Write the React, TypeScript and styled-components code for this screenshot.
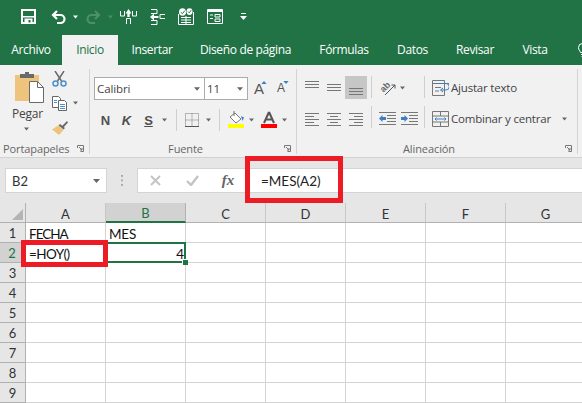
import React from "react";
import styled, { createGlobalStyle } from "styled-components";

const GlobalStyle = createGlobalStyle`
  html, body {
    margin: 0;
    padding: 0;
    width: 582px;
    height: 403px;
    overflow: hidden;
    background: #fff;
  }
`;

const uiFont = `"Open Sans", "Noto Sans", sans-serif`;

const Page = styled.div`
  width: 582px;
  height: 403px;
  overflow: hidden;
  display: flex;
  flex-direction: column;
  font-family: ${uiFont};
  color: #444;
  position: relative;
`;

const TitleBar = styled.div`
  height: 35px;
  background: #217346;
  display: flex;
  align-items: flex-start;
  padding: 8px 0 0 21px;
  box-sizing: border-box;
  flex-shrink: 0;
`;

const QatSlot = styled.div<{ $w: number }>`
  width: ${(p) => p.$w}px;
  height: 17px;
  display: flex;
  align-items: center;
`;

const TabBar = styled.div`
  height: 30px;
  background: #217346;
  display: flex;
  align-items: stretch;
  flex-shrink: 0;
`;

const Tab = styled.div<{ $w: number; $active?: boolean }>`
  width: ${(p) => p.$w}px;
  flex-shrink: 0;
  display: flex;
  align-items: center;
  justify-content: center;
  font-size: 12px;
  letter-spacing: -0.35px;
  padding-bottom: 1px;
  box-sizing: border-box;
  color: ${(p) => (p.$active ? "#217346" : "#fff")};
  background: ${(p) => (p.$active ? "#f1f1f1" : "transparent")};
`;

const TellMe = styled.div`
  margin-left: 16px;
  display: flex;
  align-items: center;
  flex-shrink: 0;
`;

const Ribbon = styled.div`
  height: 93px;
  background: #f1f1f1;
  border-bottom: 1px solid #d2d2d2;
  box-sizing: border-box;
  display: flex;
  flex-shrink: 0;
`;

const Group = styled.div<{ $w: number }>`
  width: ${(p) => p.$w}px;
  height: 85px;
  margin-top: 4px;
  flex-shrink: 0;
  box-sizing: border-box;
  border-right: 1px solid #d4d4d4;
  display: flex;
  flex-direction: column;
  position: relative;
`;

const GroupBody = styled.div`
  flex: 1;
  display: flex;
  min-height: 0;
`;

const GroupFoot = styled.div<{ $align?: string; $pr?: number }>`
  height: 11px;
  display: flex;
  align-items: center;
  justify-content: ${(p) => p.$align || "center"};
  padding: 0 ${(p) => p.$pr || 3}px 0 3px;
  font-size: 11px;
  letter-spacing: -0.1px;
  color: #666;
`;

const Launcher = styled.svg`
  position: absolute;
  right: 5px;
  bottom: 2px;
  width: 7px;
  height: 7px;
`;

const PasteColumn = styled.div`
  width: 46px;
  padding: 3px 0 0 13px;
  box-sizing: border-box;
  display: flex;
  flex-direction: column;
  align-items: center;
`;

const PasteLabel = styled.div`
  font-size: 12px;
  letter-spacing: -0.2px;
  color: #444;
  margin: 3px 0 5px -4px;
  line-height: 16px;
`;

const PasteCaret = styled.div`
  margin-right: 6px;
`;

const ClipTools = styled.div`
  display: flex;
  flex-direction: column;
  gap: 8px;
  padding: 2px 0 0 6px;
`;

const ClipRow = styled.div`
  display: flex;
  align-items: center;
  gap: 6px;
  height: 16px;
`;

const FontColumn = styled.div`
  display: flex;
  flex-direction: column;
  padding: 7px 0 0 4px;
`;

const FontRow = styled.div`
  display: flex;
  align-items: center;
`;

const Combo = styled.div<{ $w: number }>`
  width: ${(p) => p.$w}px;
  height: 23px;
  background: #fff;
  border: 1px solid #ababab;
  box-sizing: border-box;
  display: flex;
  align-items: center;
  justify-content: space-between;
  padding: 0 4px 0 2px;
  font-family: ${uiFont};
  font-size: 11.5px;
  color: #444;
  margin-right: -1px;
  letter-spacing: -0.1px;
`;

const GrowButton = styled.div<{ $w: number; $size: number; $markRight: number }>`
  width: ${(p) => p.$w}px;
  position: relative;
  font-family: "Liberation Sans", Arial, sans-serif;
  font-size: ${(p) => p.$size}px;
  color: #555;
  text-align: center;
  line-height: 25px;

  svg {
    position: absolute;
    right: ${(p) => p.$markRight}px;
    top: 5px;
    width: 6px;
    height: 3px;
  }
`;

const FormatRow = styled.div`
  display: flex;
  align-items: center;
  height: 26px;
  margin-top: 6px;
  color: #555;
`;

const FormatLetter = styled.span<{ $w: number; $italic?: boolean; $under?: boolean }>`
  width: ${(p) => p.$w}px;
  text-align: center;
  font-family: "Liberation Sans", Arial, sans-serif;
  font-weight: bold;
  font-size: 13px;
  font-style: ${(p) => (p.$italic ? "italic" : "normal")};
  text-decoration: ${(p) => (p.$under ? "underline" : "none")};
  color: #4f4f4f;
`;

const RowGap = styled.span<{ $w: number }>`
  width: ${(p) => p.$w}px;
  flex-shrink: 0;
`;

const VSep = styled.div<{ $mx: number; $h?: number }>`
  width: 1px;
  height: ${(p) => p.$h || 22}px;
  background: #cfcfcf;
  margin: 0 ${(p) => p.$mx}px;
  flex-shrink: 0;
`;

const AlignColumns = styled.div`
  display: flex;
  padding: 7px 0 0 4px;
`;

const AlignGrid = styled.div`
  display: grid;
  grid-template-columns: 22px 22px 22px;
  grid-template-rows: 23px 23px;
  row-gap: 8px;
`;

const AlignCell = styled.div<{ $on?: boolean }>`
  display: flex;
  align-items: center;
  justify-content: center;
  background: ${(p) => (p.$on ? "#c6c6c6" : "transparent")};
`;

const SepStack = styled.div<{ $mx: number }>`
  display: flex;
  flex-direction: column;
  gap: 8px;
  margin: 0 ${(p) => p.$mx}px;
`;

const IndentGrid = styled.div`
  display: grid;
  grid-template-columns: 22px 22px;
  grid-template-rows: 23px 23px;
  row-gap: 8px;
  justify-items: center;
  align-items: center;
`;

const OrientCell = styled.div`
  grid-column: span 2;
  justify-self: start;
  display: flex;
  align-items: center;
  gap: 4px;
  padding-left: 3px;
`;

const WrapColumn = styled.div`
  display: flex;
  flex-direction: column;
  gap: 8px;
  padding-left: 3px;
`;

const WrapRow = styled.div`
  height: 23px;
  display: flex;
  align-items: center;
  gap: 2px;
  font-size: 11.5px;
  letter-spacing: -0.2px;
  color: #444;
  white-space: nowrap;
`;

const FormulaArea = styled.div`
  height: 45px;
  background: #e6e6e6;
  display: flex;
  align-items: flex-start;
  padding-top: 10px;
  box-sizing: border-box;
  flex-shrink: 0;
`;

const NameBox = styled.div`
  width: 102px;
  height: 25px;
  margin-left: 5px;
  background: #fff;
  border: 1px solid #d4d4d4;
  box-sizing: border-box;
  display: flex;
  align-items: center;
  justify-content: space-between;
  padding: 0 6px;
  font-family: "Lato", sans-serif;
  font-size: 13px;
  color: #333;
`;

const Grip = styled.div`
  width: 2px;
  height: 11px;
  margin: 7px 14px 0 14px;
  background-image: linear-gradient(#a8a8a8 2px, transparent 2px);
  background-size: 2px 4.5px;
`;

const FormulaBar = styled.div`
  flex: 1;
  height: 25px;
  background: #fff;
  display: flex;
  align-items: center;
  border: 1px solid #d4d4d4;
  border-right: 0;
  box-sizing: border-box;
`;

const FormulaIcon = styled.div<{ $w: number }>`
  width: ${(p) => p.$w}px;
  display: flex;
  justify-content: center;
  flex-shrink: 0;
`;

const FxLabel = styled.span`
  font-family: "Liberation Serif", serif;
  font-style: italic;
  font-weight: bold;
  font-size: 15px;
  color: #666;
`;

const FormulaText = styled.div`
  margin-left: 16px;
  font-family: "Lato", sans-serif;
  font-size: 13.5px;
  color: #222;
`;

const RedFrame = styled.div<{ $l: number; $t: number; $w: number; $h: number }>`
  position: absolute;
  left: ${(p) => p.$l}px;
  top: ${(p) => p.$t}px;
  width: ${(p) => p.$w}px;
  height: ${(p) => p.$h}px;
  border: 5px solid #ed1c24;
  box-sizing: border-box;
  pointer-events: none;
  z-index: 3;
`;

const Sheet = styled.div`
  display: grid;
  grid-template-columns: 26px repeat(7, 80px);
  grid-auto-rows: 20px;
  width: 586px;
  background: #fff;
`;

const Corner = styled.div`
  background: #e6e6e6;
  border-right: 1px solid #b1b1b1;
  border-bottom: 1px solid #b1b1b1;
  box-sizing: border-box;
  position: relative;
  &::after {
    content: "";
    position: absolute;
    right: 2px;
    bottom: 2px;
    border-style: solid;
    border-width: 0 0 11px 11px;
    border-color: transparent transparent #b4b4b4 transparent;
  }
`;

const ColHead = styled.div<{ $on?: boolean }>`
  background: ${(p) => (p.$on ? "#d2d2d2" : "#e6e6e6")};
  border-right: 1px solid ${(p) => (p.$on ? "#b1b1b1" : "#c6c6c6")};
  border-bottom: ${(p) => (p.$on ? "2px solid #217346" : "1px solid #b1b1b1")};
  box-sizing: border-box;
  display: flex;
  align-items: center;
  justify-content: center;
  padding-top: 2px;
  font-family: "Lato", sans-serif;
  font-size: 13px;
  color: ${(p) => (p.$on ? "#217346" : "#333")};
`;

const RowHead = styled.div<{ $on?: boolean }>`
  background: ${(p) => (p.$on ? "#d2d2d2" : "#e6e6e6")};
  border-right: ${(p) => (p.$on ? "2px solid #217346" : "1px solid #b1b1b1")};
  border-bottom: 1px solid #b1b1b1;
  box-sizing: border-box;
  display: flex;
  align-items: center;
  justify-content: center;
  padding-top: 1px;
  font-family: "Lato", sans-serif;
  font-size: 13px;
  color: ${(p) => (p.$on ? "#217346" : "#333")};
`;

const Cell = styled.div<{ $right?: boolean; $tight?: number }>`
  border-right: 1px solid #d4d4d4;
  border-bottom: 1px solid #d4d4d4;
  box-sizing: border-box;
  display: flex;
  align-items: center;
  justify-content: ${(p) => (p.$right ? "flex-end" : "flex-start")};
  padding: 2px 1px 0 3px;
  font-family: "Lato", sans-serif;
  font-size: 13.5px;
  letter-spacing: ${(p) => p.$tight || 0}px;
  color: #111;
  position: relative;
`;

const Selection = styled.div`
  position: absolute;
  left: -1px;
  top: -1px;
  right: -1px;
  bottom: -1px;
  border: 2px solid #217346;
  z-index: 2;
  &::after {
    content: "";
    position: absolute;
    right: -4px;
    bottom: -4px;
    width: 5px;
    height: 5px;
    background: #217346;
    border: 1px solid #fff;
    border-right: 0;
    border-bottom: 0;
  }
`;

const Svg = styled.svg`
  display: block;
  flex-shrink: 0;
`;

const Caret: React.FC<{ color?: string; w?: number }> = ({ color = "#666", w = 7 }) => (
  <Svg width={w} height="4" viewBox="0 0 7 4">
    <path d="M0 0h7L3.5 4z" fill={color} />
  </Svg>
);

const SaveIcon = () => (
  <Svg width="15" height="15" viewBox="0 0 15 15">
    <path d="M1 1h13v13H1z" fill="none" stroke="#fff" strokeWidth="2" />
    <path d="M2 7h11v1.5H2z" fill="#fff" />
    <path d="M3.5 9.5h8V15h-8z" fill="#fff" />
    <path d="M7.5 11h2v2.5h-2z" fill="#217346" />
  </Svg>
);

const UndoIcon: React.FC<{ color: string; flip?: boolean }> = ({ color, flip }) => (
  <Svg width="15" height="14" viewBox="0 0 15 14" style={flip ? { transform: "scaleX(-1)" } : undefined}>
    <path d="M6 1L2 5l4 4" fill="none" stroke={color} strokeWidth="2.2" />
    <path d="M2 5h7.5a3.8 3.8 0 0 1 0 8H6" fill="none" stroke={color} strokeWidth="2.2" />
  </Svg>
);

const SortIcon = () => (
  <Svg width="17" height="15" viewBox="0 0 17 15" fill="none" stroke="#fff">
    <path d="M.5 2v5h4V2" />
    <path d="M12.5 2v5h4V2" />
    <path d="M8.5 8V2" strokeWidth="2.4" />
    <path d="M5.5 4.5L8.5 0l3 4.5z" fill="#fff" stroke="none" />
    <path d="M6.5 15V9.5h4V15" />
  </Svg>
);

const OutlineIcon = () => (
  <Svg width="15" height="16" viewBox="0 0 15 16" fill="none" stroke="#fff">
    <path d="M1 .5h6v4H1M1 11.5h6v4H1" />
    <path d="M2 8h6.5" strokeWidth="2" />
    <path d="M4 4.5L0 8l4 3.5z" fill="#fff" stroke="none" />
    <path d="M15 5.5h-5v4h5" />
  </Svg>
);

const FormIcon = () => (
  <Svg width="16" height="17" viewBox="0 0 16 17" fill="none" stroke="#fff">
    <path d="M.5 6v10.5h15V4" />
    <path d="M3 9.5h10M3 12h10M3 14.5h10M8 8v8" />
    <ellipse cx="4.5" cy="4" rx="3.5" ry="3.8" fill="#fff" stroke="none" />
    <ellipse cx="11.5" cy="3.6" rx="3" ry="3.4" fill="#fff" stroke="none" />
    <path d="M2.8 4.2l1.6 1.5L6.8 2.6M10 3.6l1.2 1.2 2-2.6" stroke="#217346" />
  </Svg>
);

const PanelIcon = () => (
  <Svg width="16" height="15" viewBox="0 0 16 15" fill="none" stroke="#fff">
    <path d="M.5.5h15v14H.5z" />
    <path d="M.5 2h15" strokeWidth="2" />
    <path d="M3 6h3M3 9.5h3M8 5.5h5v2.5H8zM8 10h5v2.5H8z" />
  </Svg>
);

const QatMore = () => (
  <Svg width="7" height="7" viewBox="0 0 7 7">
    <path d="M1 .5h5" stroke="#fff" />
    <path d="M0 3h7L3.5 7z" fill="#fff" />
  </Svg>
);

const BulbIcon = () => (
  <Svg width="9" height="14" viewBox="0 0 9 14" fill="none" stroke="#fff">
    <path d="M2.5 9.5C2 7.5.5 7 .5 4.5a4 4 0 0 1 8 0C8.5 7 7 7.5 6.5 9.5z" />
    <path d="M3 11.5h3M3.5 13.5h2" />
  </Svg>
);

const PasteIcon = () => (
  <Svg width="29" height="31" viewBox="0 0 29 31">
    <path d="M0 3h24v26H0z" fill="#eec47c" />
    <path d="M5 2h14v4H5z" fill="#6a6a6a" />
    <path d="M10 0h4v3h-4z" fill="#6a6a6a" />
    <path d="M14.5 9.5h8l6 6v15h-14z" fill="#fff" stroke="#6a6a6a" />
    <path d="M22.5 9.5v6h6" fill="none" stroke="#6a6a6a" />
  </Svg>
);

const ScissorsIcon = () => (
  <Svg width="15" height="16" viewBox="0 0 15 16" fill="none">
    <path d="M3 0l6.5 10M12 0L5.5 10" stroke="#6a6a6a" strokeWidth="1.5" />
    <circle cx="3.5" cy="12.5" r="2.5" stroke="#4f8fc9" strokeWidth="1.5" />
    <circle cx="11.5" cy="12.5" r="2.5" stroke="#4f8fc9" strokeWidth="1.5" />
  </Svg>
);

const CopyIcon = () => (
  <Svg width="15" height="15" viewBox="0 0 15 15" fill="#fff" stroke="#666">
    <path d="M.5.5h6l2 2v9h-8z" />
    <path d="M6.5 4.5h6l2 2v8h-8z" />
    <path d="M8 8.5h5M8 10.5h5M8 12.5h5M2 4.5h3M2 6.5h3" stroke="#4f8fc9" />
  </Svg>
);

const BrushIcon = () => (
  <Svg width="16" height="15" viewBox="0 0 16 15">
    <path d="M10 6L15 1l1 1.5L11 8z" fill="#6a6a6a" />
    <path d="M8 4l5 4-1.5 1.5-5-4z" fill="#6a6a6a" />
    <path d="M6 5.5l5.5 4.5L7 15 0 9.5z" fill="#eec47c" />
  </Svg>
);

const BorderIcon = () => (
  <Svg width="14" height="14" viewBox="0 0 14 14" fill="none" stroke="#777" strokeDasharray="1 1">
    <path d="M.5.5h13v13H.5zM7 .5v13M.5 7h13" />
    <path d="M0 13.5h14" stroke="#555" strokeDasharray="none" />
  </Svg>
);

const FillIcon = () => (
  <Svg width="17" height="18" viewBox="0 0 17 18">
    <path d="M7 2l6 6-5 4-6-6z" fill="#fff" stroke="#777" />
    <path d="M6 0v5" stroke="#777" />
    <path d="M13 5l3 1.5-1.5 3.5z" fill="#3d7fc1" />
    <path d="M0 13h16v4H0z" fill="#ffff00" />
  </Svg>
);

const FontColorIcon = () => (
  <Svg width="16" height="18" viewBox="0 0 16 18">
    <path d="M8 1l-5 11M8 1l5 11M5 8.5h6" stroke="#555" strokeWidth="2" fill="none" />
    <path d="M0 13h16v4H0z" fill="#ff0000" />
  </Svg>
);

// each entry is [y, x1, x2] of one grey rule
const Lines: React.FC<{ rows: [number, number, number][] }> = ({ rows }) => (
  <Svg width="15" height="15" viewBox="0 0 15 15" stroke="#777">
    {rows.map(([y, a, b], i) => (
      <path key={i} d={`M${a} ${y + 0.5}H${b}`} />
    ))}
  </Svg>
);

const OrientIcon = () => (
  <Svg width="17" height="17" viewBox="0 0 17 17" fill="none" overflow="visible">
    <text
      x="6"
      y="11"
      textAnchor="middle"
      transform="rotate(-45 6 8)"
      fontFamily="Liberation Sans, sans-serif"
      fontSize="9"
      fontWeight="bold"
      fill="#666"
    >
      ab
    </text>
    <path d="M6 16L16 6M12.5 6H16v3.5" stroke="#555" />
  </Svg>
);

const IndentIcon: React.FC<{ dir: "in" | "out" }> = ({ dir }) => (
  <Svg width="17" height="13" viewBox="0 0 17 13">
    <g stroke="#777">
      <path d="M0 .5h17M8 3.5h9M8 6.5h9M8 9.5h9M0 12.5h17" />
    </g>
    {dir === "out" ? (
      <path d="M0 6.5L3.5 3v2H7v3H3.5v2z" fill="#3d7fc1" />
    ) : (
      <path d="M7 6.5L3.5 3v2H0v3h3.5v2z" fill="#3d7fc1" />
    )}
  </Svg>
);

const WrapIcon = () => (
  <Svg width="17" height="16" viewBox="0 0 17 16" fill="none">
    <path d="M.5.5h12v15H.5z" stroke="#777" />
    <path d="M0 3.5h17M3 7.5h6M3 11h4" stroke="#777" />
    <path d="M3 3.5h11a2.5 2.5 0 0 1 0 6.5H9M11 8l-2.5 2 2.5 2" stroke="#3d7fc1" />
  </Svg>
);

const MergeIcon = () => (
  <Svg width="17" height="16" viewBox="0 0 17 16" fill="none">
    <path d="M.5.5h16v15H.5zM.5 5h16M.5 11h16M8.5 .5V5M8.5 11v4.5" stroke="#777" />
    <path d="M3 8h11M4.5 6.5L3 8l1.5 1.5M12.5 6.5L14 8l-1.5 1.5" stroke="#3d7fc1" />
  </Svg>
);

const LauncherIcon = () => (
  <Launcher viewBox="0 0 7 7" fill="none" stroke="#777">
    <path d="M.5 3V.5H6.5V6.5H3.5" />
    <path d="M2 2l3 3M3 5h2V3" />
  </Launcher>
);

const TABS: { name: string; w: number; active?: boolean }[] = [
  { name: "Archivo", w: 62 },
  { name: "Inicio", w: 56, active: true },
  { name: "Insertar", w: 68 },
  { name: "Diseño de página", w: 119 },
  { name: "Fórmulas", w: 78 },
  { name: "Datos", w: 59 },
  { name: "Revisar", w: 66 },
  { name: "Vista", w: 54 },
];

const COLUMNS = ["A", "B", "C", "D", "E", "F", "G"];
const ROWS = [1, 2, 3, 4, 5, 6, 7, 8, 9];

const CELLS: Record<string, { text: string; tight?: number }> = {
  A1: { text: "FECHA", tight: -1 },
  B1: { text: "MES", tight: -0.2 },
  A2: { text: "=HOY()", tight: -0.6 },
  B2: { text: "4" },
};

const App: React.FC = () => {
  return (
    <Page>
      <GlobalStyle />
      <TitleBar>
        <QatSlot $w={30}><SaveIcon /></QatSlot>
        <QatSlot $w={22}><UndoIcon color="#fff" /></QatSlot>
        <QatSlot $w={13}><Caret color="#fff" w={5} /></QatSlot>
        <QatSlot $w={22}><UndoIcon color="#4d8f6b" flip /></QatSlot>
        <QatSlot $w={12}><Caret color="#4d8f6b" w={5} /></QatSlot>
        <QatSlot $w={30}><SortIcon /></QatSlot>
        <QatSlot $w={28}><OutlineIcon /></QatSlot>
        <QatSlot $w={29}><FormIcon /></QatSlot>
        <QatSlot $w={33}><PanelIcon /></QatSlot>
        <QatSlot $w={10}><QatMore /></QatSlot>
      </TitleBar>
      <TabBar>
        {TABS.map((t) => (
          <Tab key={t.name} $w={t.w} $active={t.active}>{t.name}</Tab>
        ))}
        <TellMe><BulbIcon /></TellMe>
      </TabBar>
      <Ribbon>
        <Group $w={90}>
          <GroupBody>
            <PasteColumn>
              <PasteIcon />
              <PasteLabel>Pegar</PasteLabel>
              <PasteCaret><Caret w={5} /></PasteCaret>
            </PasteColumn>
            <ClipTools>
              <ClipRow><ScissorsIcon /></ClipRow>
              <ClipRow><CopyIcon /><Caret w={5} /></ClipRow>
              <ClipRow><BrushIcon /></ClipRow>
            </ClipTools>
          </GroupBody>
          <GroupFoot $align="flex-start">Portapapeles</GroupFoot>
          <LauncherIcon />
        </Group>
        <Group $w={207}>
          <GroupBody>
            <FontColumn>
              <FontRow>
                <Combo $w={111}>Calibri<Caret w={6} /></Combo>
                <Combo $w={44}>11<Caret w={6} /></Combo>
                <GrowButton $w={24} $size={15} $markRight={4}>
                  A
                  <svg viewBox="0 0 7 4"><path d="M0 4L3.5 0 7 4z" fill="#3d7fc1" /></svg>
                </GrowButton>
                <GrowButton $w={20} $size={12} $markRight={2}>
                  A
                  <svg viewBox="0 0 7 4"><path d="M0 0h7L3.5 4z" fill="#3d7fc1" /></svg>
                </GrowButton>
              </FontRow>
              <FormatRow>
                <FormatLetter $w={23}>N</FormatLetter>
                <FormatLetter $w={19} $italic>K</FormatLetter>
                <FormatLetter $w={25} $under>S</FormatLetter>
                <RowGap $w={1} />
                <Caret w={5} />
                <RowGap $w={1} />
                <VSep $mx={8} />
                <BorderIcon />
                <RowGap $w={7} />
                <Caret w={5} />
                <VSep $mx={8} />
                <FillIcon />
                <RowGap $w={4} />
                <Caret w={5} />
                <RowGap $w={7} />
                <FontColorIcon />
                <RowGap $w={5} />
                <Caret w={5} />
              </FormatRow>
            </FontColumn>
          </GroupBody>
          <GroupFoot $pr={18}>Fuente</GroupFoot>
          <LauncherIcon />
        </Group>
        <Group $w={281}>
          <GroupBody>
            <AlignColumns>
              <AlignGrid>
                <AlignCell><Lines rows={[[1, 0, 14], [4, 0, 14], [7, 0, 14]]} /></AlignCell>
                <AlignCell><Lines rows={[[4, 0, 14], [7, 0, 14], [10, 0, 14]]} /></AlignCell>
                <AlignCell $on><Lines rows={[[8, 0, 14], [11, 0, 14], [14, 0, 14]]} /></AlignCell>
                <AlignCell><Lines rows={[[2, 0, 14], [5, 0, 9], [8, 0, 14], [11, 0, 9], [14, 0, 14]]} /></AlignCell>
                <AlignCell><Lines rows={[[2, 0, 14], [5, 3, 11], [8, 0, 14], [11, 3, 11], [14, 0, 14]]} /></AlignCell>
                <AlignCell><Lines rows={[[2, 0, 14], [5, 5, 14], [8, 0, 14], [11, 5, 14], [14, 0, 14]]} /></AlignCell>
              </AlignGrid>
              <SepStack $mx={4}>
                <VSep $mx={0} />
                <VSep $mx={0} />
              </SepStack>
              <IndentGrid>
                <OrientCell><OrientIcon /><Caret w={5} /></OrientCell>
                <IndentIcon dir="out" />
                <IndentIcon dir="in" />
              </IndentGrid>
              <SepStack $mx={4}>
                <VSep $mx={0} />
                <VSep $mx={0} />
              </SepStack>
              <WrapColumn>
                <WrapRow><WrapIcon />Ajustar texto</WrapRow>
                <WrapRow><MergeIcon />Combinar y centrar<RowGap $w={7} /><Caret w={5} /></WrapRow>
              </WrapColumn>
            </AlignColumns>
          </GroupBody>
          <GroupFoot $pr={19}>Alineación</GroupFoot>
          <LauncherIcon />
        </Group>
      </Ribbon>
      <FormulaArea>
        <NameBox>B2<Caret w={7} /></NameBox>
        <Grip />
        <FormulaBar>
          <FormulaIcon $w={35}>
            <Svg width="11" height="11" viewBox="0 0 11 11" stroke="#c4c4c4" strokeWidth="2"><path d="M1 1l9 9M10 1l-9 9" /></Svg>
          </FormulaIcon>
          <FormulaIcon $w={38}>
            <Svg width="13" height="11" viewBox="0 0 13 11" fill="none" stroke="#c4c4c4" strokeWidth="2.4"><path d="M1 6l4 4 7-9" /></Svg>
          </FormulaIcon>
          <FormulaIcon $w={34}><FxLabel>fx</FxLabel></FormulaIcon>
          <FormulaText>=MES(A2)</FormulaText>
        </FormulaBar>
      </FormulaArea>
      <RedFrame $l={245} $t={156} $w={98} $h={47} />
      <RedFrame $l={21} $t={240} $w={87} $h={27} />
      <Sheet>
        <Corner />
        {COLUMNS.map((c) => (
          <ColHead key={c} $on={c === "B"}>{c}</ColHead>
        ))}
        {ROWS.map((r) => (
          <React.Fragment key={r}>
            <RowHead $on={r === 2}>{r}</RowHead>
            {COLUMNS.map((c) => {
              const id = `${c}${r}`;
              return (
                <Cell key={id} $right={id === "B2"} $tight={CELLS[id]?.tight}>
                  {CELLS[id]?.text}
                  {id === "B2" && <Selection />}
                </Cell>
              );
            })}
          </React.Fragment>
        ))}
      </Sheet>
    </Page>
  );
};

export default App;
